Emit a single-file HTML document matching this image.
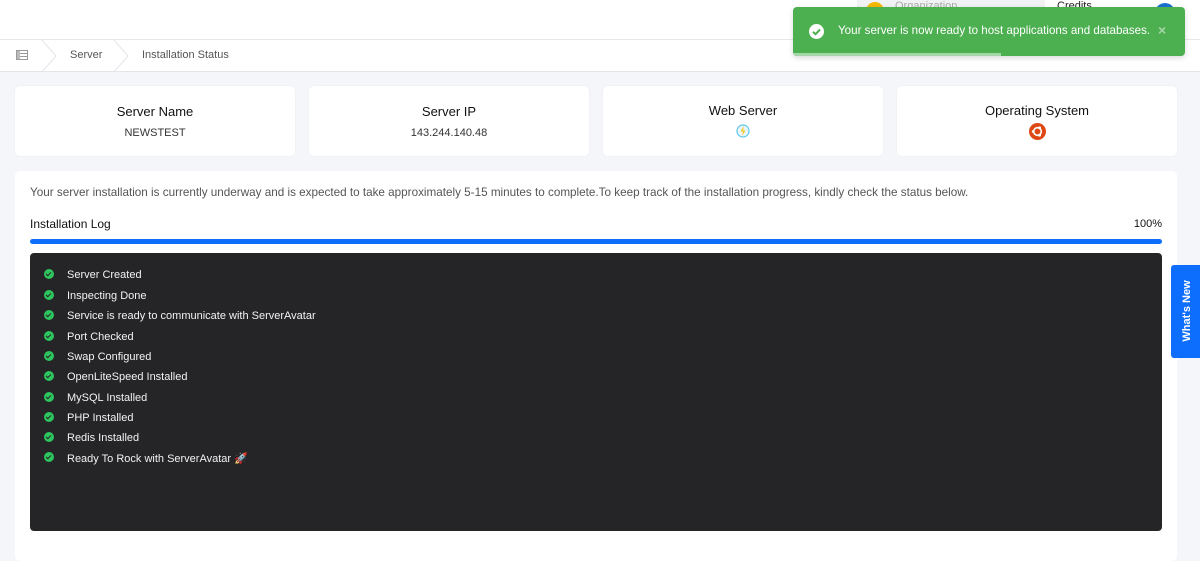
<!DOCTYPE html>
<html><head><style>
*{margin:0;padding:0;box-sizing:border-box}
body{width:1200px;height:545px;overflow:hidden;background:#f4f6f9;font-family:"Liberation Sans",sans-serif;position:relative;color:#222}
.hdr{position:absolute;left:0;top:0;width:1200px;height:40px;background:#fff;border-bottom:1px solid #e6e8ec}
.bc{position:absolute;left:0;top:40px;width:1200px;height:32px;background:#fff;border-bottom:1px solid #e3e5e9;font-size:11px;color:#555}
.card{position:absolute;top:86px;width:280px;height:70px;background:#fff;border-radius:5px;text-align:center;box-shadow:0 0 2px rgba(0,0,0,.05)}
.card b{display:block;font-weight:normal;font-size:13px;color:#111;margin-top:18px}
.card span{display:block;font-size:11px;color:#333;margin-top:8px}
.main{position:absolute;left:15px;top:171px;width:1162px;height:390px;background:#fff;border-radius:5px}
.log{position:absolute;left:30px;top:253px;width:1132px;height:278px;background:#252527;border-radius:4px}
.li{position:absolute;left:14px;font-size:11px;color:#f2f2f2}
.li i{position:absolute;left:0;top:0px;width:10px;height:10px;border-radius:50%;background:#2ec45e}
.li i:after{content:"";position:absolute;left:3px;top:2px;width:2px;height:4px;border:solid #252527;border-width:0 1.5px 1.5px 0;transform:rotate(45deg)}
.li span{margin-left:23px}
</style></head><body>
<div class="hdr">
<div style="position:absolute;left:857px;top:0;width:188px;height:40px;background:#f1f2f4"></div>
<div style="position:absolute;left:866px;top:2px;width:18px;height:18px;border-radius:50%;background:#f5b800"></div>
<div style="position:absolute;left:895px;top:0;font-size:11px;color:#aaa">Organization</div>
<div style="position:absolute;left:1057px;top:0;font-size:11px;color:#222">Credits</div>
<div style="position:absolute;left:1155px;top:3px;width:20px;height:20px;border-radius:50%;background:#1a6fd0"></div>
</div>
<div class="bc">
<svg style="position:absolute;left:16px;top:10px" width="12" height="10"><rect x="0.5" y="0.5" width="11" height="9" fill="none" stroke="#999"/><rect x="1" y="1" width="3" height="8" fill="#bbb"/><line x1="4" y1="3.5" x2="11" y2="3.5" stroke="#999"/><line x1="4" y1="6.5" x2="11" y2="6.5" stroke="#999"/></svg>
<svg style="position:absolute;left:40px;top:0" width="20" height="32"><path d="M2 0 L16 16 L2 32" fill="none" stroke="#e3e5e9"/></svg>
<div style="position:absolute;left:70px;top:9px">Server</div>
<svg style="position:absolute;left:112px;top:0" width="20" height="32"><path d="M2 0 L16 16 L2 32" fill="none" stroke="#e3e5e9"/></svg>
<div style="position:absolute;left:142px;top:9px">Installation Status</div>
</div>
<div class="card" style="left:15px"><b>Server Name</b><span>NEWSTEST</span></div>
<div class="card" style="left:309px"><b>Server IP</b><span>143.244.140.48</span></div>
<div class="card" style="left:603px"><b style="margin-top:17px">Web Server</b>
<svg style="margin-top:6px" width="14" height="14"><circle cx="7" cy="7" r="6" fill="#e9f7fc" stroke="#5fc6e8" stroke-width="1.2"/><path d="M8 2 L4.5 7.5 H7 L6 12 L9.5 6.5 H7 Z" fill="#f5c518"/></svg></div>
<div class="card" style="left:897px"><b style="margin-top:17px">Operating System</b>
<svg style="margin-top:5px" width="17" height="17"><circle cx="8.5" cy="8.5" r="8.5" fill="#dd4814"/><circle cx="8.5" cy="8.5" r="3.8" fill="none" stroke="#fff" stroke-width="1.6"/><circle cx="4.2" cy="8.5" r="1.4" fill="#fff"/><circle cx="10.6" cy="4.8" r="1.4" fill="#fff"/><circle cx="10.6" cy="12.2" r="1.4" fill="#fff"/></svg></div>
<div class="main">
<div style="position:absolute;left:15px;top:15px;font-size:11.7px;color:#555">Your server installation is currently underway and is expected to take approximately 5-15 minutes to complete.To keep track of the installation progress, kindly check the status below.</div>
<div style="position:absolute;left:15px;top:46px;font-size:12px;color:#111">Installation Log</div>
<div style="position:absolute;right:15px;top:47px;font-size:11px;color:#111">100%</div>
<div style="position:absolute;left:15px;top:68px;width:1132px;height:5px;background:#0d6efd;border-radius:3px"></div>
</div>
<div class="log">
<div class="li" style="top:16px"><i></i><span>Server Created</span></div>
<div class="li" style="top:36.5px"><i></i><span>Inspecting Done</span></div>
<div class="li" style="top:57px"><i></i><span>Service is ready to communicate with ServerAvatar</span></div>
<div class="li" style="top:77.5px"><i></i><span>Port Checked</span></div>
<div class="li" style="top:98px"><i></i><span>Swap Configured</span></div>
<div class="li" style="top:118px"><i></i><span>OpenLiteSpeed Installed</span></div>
<div class="li" style="top:138.5px"><i></i><span>MySQL Installed</span></div>
<div class="li" style="top:159px"><i></i><span>PHP Installed</span></div>
<div class="li" style="top:179px"><i></i><span>Redis Installed</span></div>
<div class="li" style="top:199px"><i></i><span>Ready To Rock with ServerAvatar 🚀</span></div>
</div>
<div style="position:absolute;left:1171px;top:265px;width:32px;height:93px;background:#0d6efd;border-radius:3px 0 0 3px"><div style="position:absolute;left:16px;top:46px;transform:translate(-50%,-50%) rotate(-90deg);white-space:nowrap;color:#fff;font-size:11px;font-weight:bold">What's New</div></div>
<div style="position:absolute;left:793px;top:7px;width:392px;height:49px;background:#4caf50;border-radius:4px;box-shadow:0 2px 6px rgba(0,0,0,.15);overflow:hidden">
<svg style="position:absolute;left:16px;top:17px" width="15" height="15"><circle cx="7.5" cy="7.5" r="7.5" fill="#fff"/><path d="M4 7.8 L6.5 10.2 L11 5.5" fill="none" stroke="#4caf50" stroke-width="2"/></svg>
<div style="position:absolute;left:45px;top:17px;font-size:11.6px;color:#fff;white-space:nowrap">Your server is now ready to host applications and databases.</div>
<div style="position:absolute;left:365px;top:15px;font-size:14px;color:#a5d6a7;font-weight:bold">×</div>
<div style="position:absolute;left:0;bottom:0;width:208px;height:3px;background:#a5d6a7"></div>
</div>
</body></html>
